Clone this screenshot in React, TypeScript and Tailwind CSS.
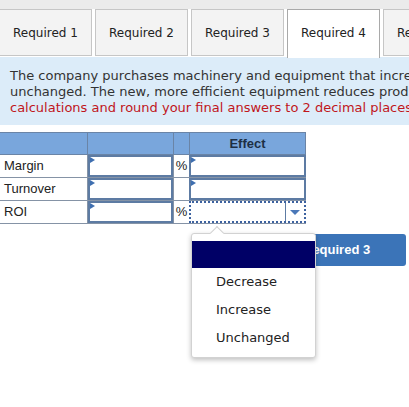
import React from "react";

const verdana = "font-['DejaVu_Sans',Verdana,sans-serif]";
const arial = "font-['Liberation_Sans',Arial,sans-serif]";

function Marker() {
  return (
    <span className="absolute left-0 top-0 w-0 h-0 border-y-[3px] border-y-transparent border-l-[5px] border-l-[#3f6fb0]" />
  );
}

function InputBox() {
  return (
    <div className="relative h-full border-2 border-[#5d7ba3] bg-white">
      <Marker />
    </div>
  );
}

export default function App() {
  const tabs = ["Required 1", "Required 2", "Required 3", "Required 4", "Required 5"];
  const rows = [
    { label: "Margin", pct: true, effect: "input" },
    { label: "Turnover", pct: false, effect: "input" },
    { label: "ROI", pct: true, effect: "select" },
  ];

  return (
    <div className="relative w-[409px] h-[407px] overflow-hidden bg-white">
      <div className="w-[900px]">
        {/* tab strip */}
        <div className="h-[9px] bg-[#ebebeb]" />
        <div className={`flex gap-[3px] -ml-[1px] h-[48px] ${verdana}`}>
          {tabs.map((t, i) => (
            <div
              key={t}
              className={
                i === 3
                  ? "w-[93px] flex items-center justify-center pb-[2px] text-[12px] text-[#222] bg-white border border-[#a9a9a9] border-b-0 h-[49px] relative z-10"
                  : "w-[93px] flex items-center justify-center text-[12px] text-[#222] bg-[#f3f3f3] border border-[#c6c6c6] h-[47px]"
              }
            >
              {t}
            </div>
          ))}
        </div>

        {/* instructions */}
        <div className={`bg-[#dcecf9] pt-[11px] pb-[9px] px-[10px] text-[13px] leading-[16px] ${verdana}`}>
          <p className="whitespace-nowrap text-[#333]">
            The company purchases machinery and equipment that increases sales volume and invested assets, with margin remaining
          </p>
          <p className="whitespace-nowrap text-[#333]">
            unchanged. The new, more efficient equipment reduces production costs and increases margin.{" "}
            <span className="text-[#c0161c]">(Do not round intermediate</span>
          </p>
          <p className="whitespace-nowrap text-[#c0161c]">
            calculations and round your final answers to 2 decimal places.)
          </p>
        </div>

        {/* table */}
        <div className={`mt-[7px] grid grid-cols-[87px_86px_16px_117px] w-[306px] text-[12px] text-[#222] ${arial}`}>
          <div className="h-[23px] bg-[#79a6dc] border-t border-b border-[#6a84a6]" />
          <div className="h-[23px] bg-[#79a6dc] border-t border-b border-l border-[#6a84a6]" />
          <div className="h-[23px] bg-[#79a6dc] border-t border-b border-l border-[#6a84a6]" />
          <div className="h-[23px] bg-[#79a6dc] border-t border-b border-l border-r border-[#6a84a6] flex items-center justify-center text-[13px] font-bold text-[#1d2f45]">
            Effect
          </div>
          {rows.map((r) => (
            <React.Fragment key={r.label}>
              <div className="h-[23px] border-b border-[#8593a6] flex items-center pl-[4px] text-[13px]">{r.label}</div>
              <div className="h-[23px] border-b border-l border-[#8593a6]">
                <InputBox />
              </div>
              <div className="h-[23px] border-b border-l border-[#8593a6] flex items-center justify-center text-[13px]">
                {r.pct ? "%" : ""}
              </div>
              <div className="h-[23px] border-b border-[#8593a6]">
                {r.effect === "input" ? (
                  <InputBox />
                ) : (
                  <div className="h-full flex border-2 border-dotted border-[#3d62a0] bg-white">
                    <div className="flex-1" />
                    <div className="w-[19px] border-l border-[#5d7ba3] flex items-center justify-center">
                      <span className="w-0 h-0 border-x-[5px] border-x-transparent border-t-[5px] border-t-[#4b78b8]" />
                    </div>
                  </div>
                )}
              </div>
            </React.Fragment>
          ))}
        </div>

        {/* nav button */}
        <div className="mt-[10px] w-[409px] flex justify-end pr-[3px]">
          <button className={`h-[32px] w-[150px] rounded-[3px] bg-[#3b74b8] text-white font-bold text-[13px] ${arial}`}>
            &lt; Required 3
          </button>
        </div>
      </div>

      {/* dropdown popup */}
      <div className={`absolute left-[191px] top-[233px] w-[125px] h-[125px] bg-white border border-[#d2d2d2] rounded-[3px] shadow-[0_2px_5px_rgba(0,0,0,0.25)] pt-[7px] ${verdana}`}>
        <span className="absolute -top-[6px] left-[20px] w-[10px] h-[10px] rotate-45 bg-white border-l border-t border-[#d2d2d2]" />
        <div className="relative h-[27px] bg-[#000066]" />
        <ul className="text-[13px] text-[#222]">
          <li className="h-[28px] flex items-center pl-[24px]">Decrease</li>
          <li className="h-[28px] flex items-center pl-[24px]">Increase</li>
          <li className="h-[28px] flex items-center pl-[24px]">Unchanged</li>
        </ul>
      </div>
    </div>
  );
}
